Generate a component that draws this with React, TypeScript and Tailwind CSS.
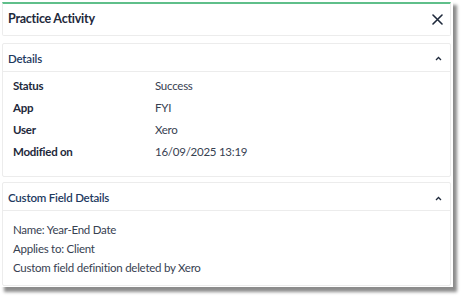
export default function App() {
  const details = [
    { label: "Status", value: "Success" },
    { label: "App", value: "FYI" },
    { label: "User", value: "Xero" },
    { label: "Modified on", value: "16/09/2025 13:19" },
  ];

  return (
    <div className="w-[466px] h-[304px] bg-white" style={{ fontFamily: 'Lato, "Noto Sans", sans-serif' }}>
      <div className="w-[453px] h-[287px] bg-white shadow-[4px_5px_3px_rgba(0,0,0,0.45)] px-[2px] pt-[2px] flex flex-col text-[#1f2937]">
        {/* Header */}
        <div className="h-[34px] border-t-2 border-t-[#5fbf8a] border-x border-b border-[#ececec] rounded-b-[2px] flex items-center justify-between pl-[5px] pr-[7px]">
          <span className="text-[12.5px] font-bold tracking-[-0.25px] text-[#1e293b]">Practice Activity</span>
          <svg width="11" height="11" viewBox="0 0 11 11" className="text-[#1e293b]">
            <path d="M1 1L10 10M10 1L1 10" stroke="currentColor" strokeWidth="1.6" strokeLinecap="round" />
          </svg>
        </div>

        {/* Details */}
        <div className="mt-[7px] h-[134px] border border-[#ececec] rounded-[2px] flex flex-col">
          <div className="h-[28px] pt-[2px] border-b border-[#ececec] flex items-center justify-between pl-[5px] pr-[8px]">
            <span className="text-[11.5px] font-semibold tracking-[-0.2px] text-[#1e3a5f]">Details</span>
            <svg width="7" height="5" viewBox="0 0 7 5">
              <path d="M1 4L3.5 1.5L6 4" fill="none" stroke="#1e293b" strokeWidth="1.3" />
            </svg>
          </div>
          <div className="pl-[10px] pt-[3px] flex flex-col">
            {details.map((d) => (
              <div key={d.label} className="h-[22px] flex items-center text-[11.5px] tracking-[-0.25px]">
                <span className="w-[142px] font-bold text-[#1e293b]">{d.label}</span>
                <span className="text-[#374151]">{d.value}</span>
              </div>
            ))}
          </div>
        </div>

        {/* Custom Field Details */}
        <div className="mt-[5px] flex-1 mb-[1px] border border-[#ececec] rounded-[2px] flex flex-col">
          <div className="h-[28px] pt-[3px] border-b border-[#ececec] flex items-center justify-between pl-[5px] pr-[8px]">
            <span className="text-[11.5px] font-semibold tracking-[-0.2px] text-[#1e3a5f]">Custom Field Details</span>
            <svg width="7" height="5" viewBox="0 0 7 5">
              <path d="M1 4L3.5 1.5L6 4" fill="none" stroke="#1e293b" strokeWidth="1.3" />
            </svg>
          </div>
          <div className="pl-[10px] pt-[9px] flex flex-col text-[11.5px] tracking-[-0.25px] text-[#374151]">
            <div className="h-[19px] flex items-center">Name: Year-End Date</div>
            <div className="h-[19px] flex items-center">Applies to: Client</div>
            <div className="h-[19px] flex items-center">Custom field definition deleted by Xero</div>
          </div>
        </div>
      </div>
    </div>
  );
}
